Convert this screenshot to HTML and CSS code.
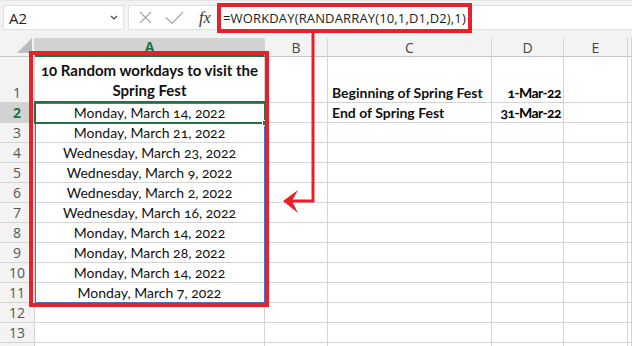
FILE: index.html
```html
<!DOCTYPE html>
<html>
<head>
  <title>Spring Fest workdays</title>
  <link rel="stylesheet" href="styles.css">
</head>
<body>
  <div class="app">
    <div class="formula-bar">
      <div class="name-box">
        <span>A2</span>
        <svg class="chevron" width="8" height="5" viewBox="0 0 8 5"><path d="M1 1l3 3 3-3" fill="none" stroke="#444" stroke-width="1.2"/></svg>
      </div>
      <div class="formula-box">
        <div class="fx-tools">
          <svg width="13" height="13" viewBox="0 0 13 13"><path d="M1 1l11 11M12 1L1 12" stroke="#a6a6a6" stroke-width="1.1" fill="none"/></svg>
          <svg width="19" height="13" viewBox="0 0 19 13"><path d="M1 6.5l6 6 11-11.5" stroke="#a6a6a6" stroke-width="1.1" fill="none"/></svg>
          <span class="fx">fx</span>
        </div>
        <div class="formula">=WORKDAY(RANDARRAY(10,1,D1,D2),1)</div>
      </div>
    </div>

    <div class="sheet top">
      <div class="corner"><span class="tri"></span></div>
      <div class="col-head selected">A</div>
      <div class="col-head">B</div>
      <div class="col-head">C</div>
      <div class="col-head">D</div>
      <div class="col-head">E</div>
      <div class="col-head"></div>

      <div class="row-head">1</div>
      <div class="cell center title">10 Random workdays to visit the Spring Fest</div>
      <div class="cell"></div>
      <div class="cell left strong">Beginning of Spring Fest</div>
      <div class="cell right date">1-Mar-22</div>
      <div class="cell"></div>
      <div class="cell"></div>

      <div class="row-head selected">2</div>
      <div class="cell center">Monday, March 14, 2022</div>
      <div class="cell"></div>
      <div class="cell left strong">End of Spring Fest</div>
      <div class="cell right date">31-Mar-22</div>
      <div class="cell"></div>
      <div class="cell"></div>
    </div>
    <div class="sheet" id="rows"></div>

    <div class="red-box formula-mark"></div>
    <div class="spill"></div>
    <div class="selection"><span class="handle"></span></div>
    <div class="red-box column-mark"></div>
    <svg class="arrow" width="632" height="346" viewBox="0 0 632 346">
      <polyline points="313,33 313,201 291,201" fill="none" stroke="#e8202a" stroke-width="3"/>
      <polygon points="283,201 298,190 292,201 298,213" fill="#e8202a"/>
    </svg>
  </div>

  <script>
const dates = [
  "Monday, March 21, 2022",
  "Wednesday, March 23, 2022",
  "Wednesday, March 9, 2022",
  "Wednesday, March 2, 2022",
  "Wednesday, March 16, 2022",
  "Monday, March 14, 2022",
  "Monday, March 28, 2022",
  "Monday, March 14, 2022",
  "Monday, March 7, 2022",
  "",
  ""
];

const rows = document.getElementById("rows");
// one extra row at the bottom, only its top edge shows
dates.concat([null]).forEach((date, i) => {
  const head = document.createElement("div");
  head.className = "row-head";
  head.textContent = date === null ? "" : i + 3;
  rows.appendChild(head);
  const a = document.createElement("div");
  a.className = "cell center";
  a.textContent = date || "";
  rows.appendChild(a);
  for (let c = 0; c < 5; c++) {
    const cell = document.createElement("div");
    cell.className = "cell";
    rows.appendChild(cell);
  }
});
</script>
</body>
</html>
```

FILE: styles.css
```css
* {
  box-sizing: border-box;
}

body {
  margin: 0;
  background: #ffffff;
  font-family: "Open Sans", "Noto Sans", sans-serif;
  overflow: hidden;
}

.app {
  position: relative;
  width: 632px;
  height: 346px;
  overflow: hidden;
}

/* formula bar */

.formula-bar {
  display: flex;
  height: 38px;
  padding: 4px 0 8px 3px;
  gap: 4px;
  background: #f3f3f3;
  border-top: 1px solid #e6e6e6;
}

.name-box {
  display: flex;
  align-items: center;
  justify-content: space-between;
  width: 121px;
  padding: 0 5px 0 5px;
  background: #ffffff;
  border: 1px solid #e1e1e1;
  font-size: 15px;
  color: #222;
}

.formula-box {
  flex: 1;
  display: flex;
  align-items: center;
  background: #ffffff;
  border: 1px solid #e1e1e1;
  border-right: none;
}

.fx-tools {
  display: flex;
  align-items: center;
  gap: 13px;
  width: 89px;
  padding-left: 10px;
}

.fx {
  font-family: "Liberation Serif", serif;
  font-style: italic;
  font-size: 16px;
  color: #333;
  margin-left: 2px;
}

.formula {
  padding-left: 5px;
  font-size: 13px;
  letter-spacing: 0.15px;
  color: #222;
  white-space: nowrap;
}

/* grid */

.sheet {
  display: grid;
  grid-template-columns: 35px 230px 63px 164px 72px 64px 1fr;
  grid-auto-rows: 20px;
}

.sheet.top {
  grid-template-rows: 19px 46px 20px;
}

.corner {
  position: relative;
  background: #f3f3f3;
  border-right: 1px solid #d4d4d4;
  border-bottom: 1px solid #c6c6c6;
}

.tri {
  position: absolute;
  right: 2px;
  bottom: 3px;
  width: 0;
  height: 0;
  border-left: 15px solid transparent;
  border-bottom: 15px solid #bcbcbc;
}

.col-head {
  display: flex;
  align-items: center;
  justify-content: center;
  background: #f3f3f3;
  border-right: 1px solid #d4d4d4;
  border-bottom: 1px solid #c6c6c6;
  font-size: 14px;
  color: #444;
}

.col-head.selected {
  background: #d2d2d2;
  color: #217346;
  font-weight: 700;
  border-bottom: 2px solid #217346;
}

.row-head {
  display: flex;
  align-items: flex-end;
  justify-content: center;
  padding-bottom: 0;
  background: #f3f3f3;
  border-right: 1px solid #d4d4d4;
  border-bottom: 1px solid #d4d4d4;
  font-size: 14px;
  line-height: 19px;
  color: #555;
}

.row-head.selected {
  background: #d2d2d2;
  color: #217346;
  font-weight: 700;
}

.cell {
  display: flex;
  align-items: flex-end;
  border-right: 1px solid #d4d4d4;
  border-bottom: 1px solid #d4d4d4;
  font-family: "Lato", "Open Sans", sans-serif;
  font-feature-settings: "onum";
  font-size: 14px;
  line-height: 19px;
  color: #111;
  white-space: nowrap;
}

.cell.center {
  justify-content: center;
  text-align: center;
}

.cell.left {
  padding-left: 4px;
}

.cell.right {
  justify-content: flex-end;
  padding-right: 2px;
}

.cell.title {
  white-space: normal;
  font-size: 15px;
  font-weight: 700;
  line-height: 20px;
  padding: 0 2px 2px;
}

.cell.strong {
  font-weight: 700;
}

.cell.date {
  font-weight: 700;
  letter-spacing: -0.6px;
  color: #000;
}

/* marks laid over the grid */

.red-box {
  position: absolute;
  border: 4px solid #e8202a;
}

.formula-mark {
  left: 217px;
  top: 3px;
  width: 255px;
  height: 30px;
}

.column-mark {
  left: 29px;
  top: 51px;
  width: 240px;
  height: 256px;
}

.spill {
  position: absolute;
  left: 35px;
  top: 103px;
  width: 230px;
  height: 200px;
  border: 1px solid #4472c4;
}

.selection {
  position: absolute;
  left: 34px;
  top: 101px;
  width: 232px;
  height: 23px;
  border: 2px solid #217346;
}

.handle {
  position: absolute;
  right: -4px;
  bottom: -4px;
  width: 6px;
  height: 6px;
  background: #217346;
  border: 1px solid #ffffff;
}

.arrow {
  position: absolute;
  left: 0;
  top: 0;
}
```
